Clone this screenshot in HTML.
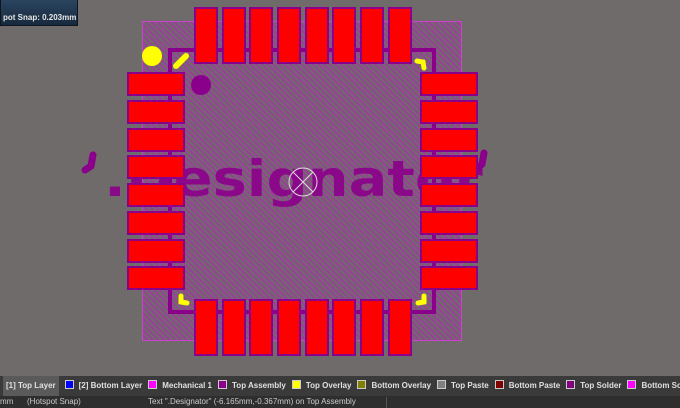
<!DOCTYPE html>
<html><head><style>
html,body{margin:0;padding:0}
body{width:680px;height:408px;background:#6e6b6a;position:relative;overflow:hidden;font-family:"Liberation Sans",sans-serif}
.hatch{position:absolute;left:142px;top:21px;width:320px;height:320px;border:1px solid #d040d0;box-sizing:border-box;
background:repeating-linear-gradient(45deg,#6e6b6a 0 2px,#9a3f9a 2px 4px)}
.body{position:absolute;left:168px;top:48px;width:268px;height:266px;border:4px solid #8b008b;box-sizing:border-box}
.pad{position:absolute;background:#ff0000;border:2px solid #8b008b;box-sizing:border-box}
.v{width:24px;height:57px}
.h{width:58px;height:24px}
.txt{position:absolute;left:104px;top:150px;font-size:50px;line-height:58px;font-weight:bold;color:#8b008b;opacity:0.9;font-family:"DejaVu Sans",sans-serif;white-space:nowrap;transform:scaleX(1.15);transform-origin:0 0}
.bar{position:absolute;left:0;top:376px;width:680px;height:20px;background:#3a3a3a;color:#e0e0e0;font-size:8px;font-weight:bold;white-space:nowrap;overflow:hidden}
.bar span{display:inline-block;line-height:20px}
.sw{display:inline-block;width:7px;height:7px;border:1px solid #ccc;margin:0 5px 0 6px;vertical-align:-1px}
.status{position:absolute;left:0;top:396px;width:680px;height:12px;background:#2e2e2e;color:#ccc;font-size:8px;line-height:12px;white-space:nowrap}
</style></head><body>
<div class="hatch"></div>
<div class="txt">.Designator</div>
<div class="body"></div>
<svg style="position:absolute;left:0;top:0" width="680" height="370">
<circle cx="152" cy="56" r="10" fill="#ffff00"/>
<line x1="176" y1="66" x2="186" y2="56" stroke="#ffff00" stroke-width="6" stroke-linecap="round"/>
<circle cx="201" cy="85" r="10" fill="#8b008b"/>
<path d="M93 155 L91 166 L85 170" stroke="#8b008b" stroke-width="7" fill="none" stroke-linecap="round"/>
<path d="M484 153 L482 164 L476 170" stroke="#8b008b" stroke-width="7" fill="none" stroke-linecap="round"/>
<path d="M181 296 L181 302 L187 303" stroke="#ffff00" stroke-width="5" fill="none" stroke-linecap="round"/>
<path d="M424 296 L424 302 L418 303" stroke="#ffff00" stroke-width="5" fill="none" stroke-linecap="round"/>
<path d="M417 61 L423 62 L424 68" stroke="#ffff00" stroke-width="5" fill="none" stroke-linecap="round"/>
<circle cx="303" cy="182" r="14" fill="none" stroke="#ddd" stroke-width="1"/>
<line x1="293" y1="172" x2="313" y2="192" stroke="#ddd"/><line x1="313" y1="172" x2="293" y2="192" stroke="#ddd"/>
</svg>
<div class="pad v" style="left:194px;top:7px"></div><div class="pad v" style="left:222px;top:7px"></div><div class="pad v" style="left:249px;top:7px"></div><div class="pad v" style="left:277px;top:7px"></div><div class="pad v" style="left:305px;top:7px"></div><div class="pad v" style="left:332px;top:7px"></div><div class="pad v" style="left:360px;top:7px"></div><div class="pad v" style="left:388px;top:7px"></div>
<div class="pad v" style="left:194px;top:299px"></div><div class="pad v" style="left:222px;top:299px"></div><div class="pad v" style="left:249px;top:299px"></div><div class="pad v" style="left:277px;top:299px"></div><div class="pad v" style="left:305px;top:299px"></div><div class="pad v" style="left:332px;top:299px"></div><div class="pad v" style="left:360px;top:299px"></div><div class="pad v" style="left:388px;top:299px"></div>
<div class="pad h" style="left:127px;top:72px"></div><div class="pad h" style="left:127px;top:100px"></div><div class="pad h" style="left:127px;top:128px"></div><div class="pad h" style="left:127px;top:155px"></div><div class="pad h" style="left:127px;top:183px"></div><div class="pad h" style="left:127px;top:211px"></div><div class="pad h" style="left:127px;top:239px"></div><div class="pad h" style="left:127px;top:266px"></div>
<div class="pad h" style="left:420px;top:72px"></div><div class="pad h" style="left:420px;top:100px"></div><div class="pad h" style="left:420px;top:128px"></div><div class="pad h" style="left:420px;top:155px"></div><div class="pad h" style="left:420px;top:183px"></div><div class="pad h" style="left:420px;top:211px"></div><div class="pad h" style="left:420px;top:239px"></div><div class="pad h" style="left:420px;top:266px"></div>
<div style="position:absolute;left:0;top:0;width:78px;height:26px;background:linear-gradient(#2a4560,#17293d);border:1px solid #0c1520;border-top:none;box-sizing:border-box;color:#e8e8e8;font-size:8px;font-weight:bold;padding:13px 0 0 2px;white-space:nowrap">pot Snap: 0.203mm</div>
<div class="bar"><span style="background:#5a5a5a;padding:0 3px;margin-left:3px">[1] Top Layer</span><span class="sw" style="background:#0000ff"></span><span>[2] Bottom Layer</span><span class="sw" style="background:#ff00ff"></span><span>Mechanical 1</span><span class="sw" style="background:#8b008b"></span><span>Top Assembly</span><span class="sw" style="background:#ffff00"></span><span>Top Overlay</span><span class="sw" style="background:#808000"></span><span>Bottom Overlay</span><span class="sw" style="background:#808080"></span><span>Top Paste</span><span class="sw" style="background:#800000"></span><span>Bottom Paste</span><span class="sw" style="background:#800080"></span><span>Top Solder</span><span class="sw" style="background:#ff00ff"></span><span>Bottom Solder</span><span class="sw" style="background:#800000"></span><span>D</span></div>
<div class="status"><span style="position:absolute;left:0">mm</span><span style="position:absolute;left:27px">(Hotspot Snap)</span><span style="position:absolute;left:148px">Text ".Designator" (-6.165mm,-0.367mm) on Top Assembly</span><span style="position:absolute;left:386px;top:1px;width:1px;height:11px;background:#555"></span></div>
</body></html>
